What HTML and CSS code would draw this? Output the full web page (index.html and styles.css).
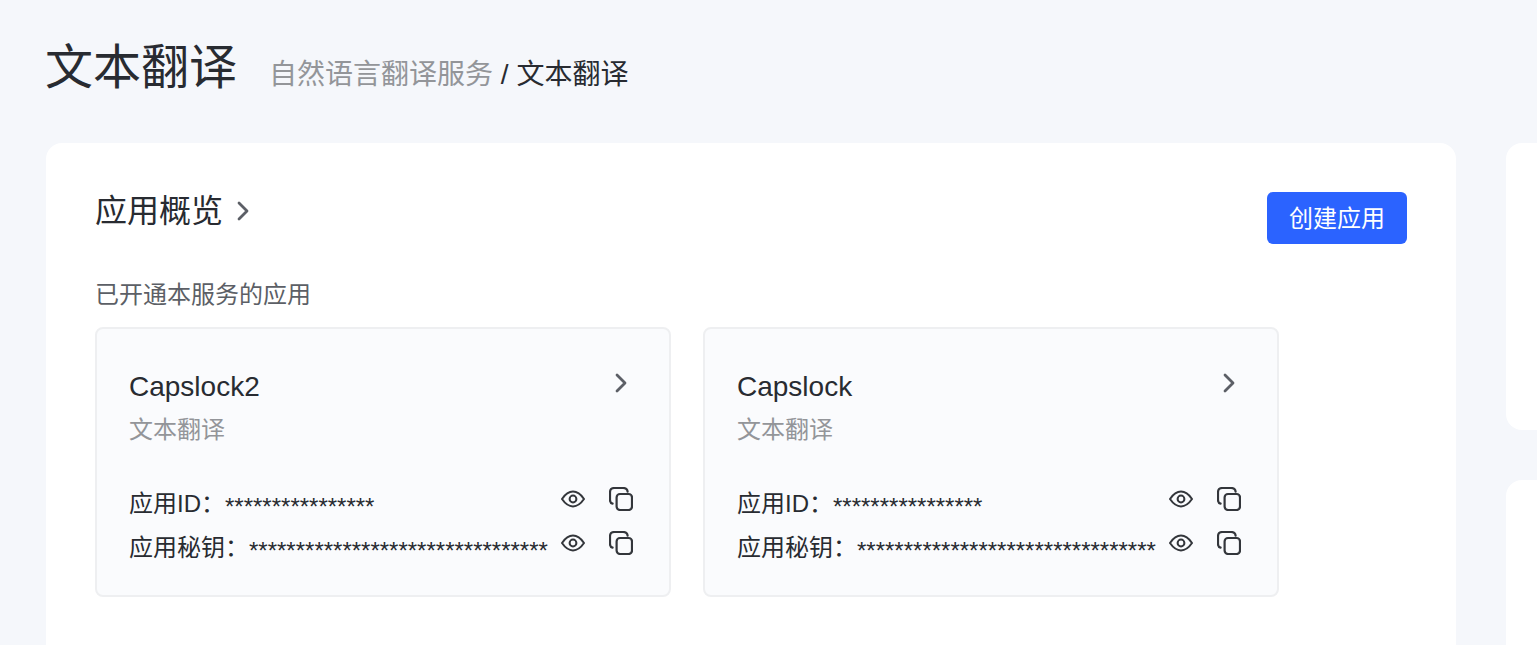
FILE: index.html
```html
<!DOCTYPE html>
<html lang="zh-CN">
<head>
<meta charset="utf-8">
<title>文本翻译</title>
<link rel="stylesheet" href="styles.css">
</head>
<body>
<svg class="defs" width="0" height="0" aria-hidden="true">
  <symbol id="eye" viewBox="0 0 24 24">
    <path d="M1 12C4 7.6 7.8 4.6 12 4.6S20 7.6 23 12C20 16.4 16.2 19.4 12 19.4S4 16.4 1 12Z" fill="none" stroke="currentColor" stroke-width="2" stroke-linejoin="round"/>
    <circle cx="12" cy="12" r="3.4" fill="none" stroke="currentColor" stroke-width="2"/>
  </symbol>
  <symbol id="copy" viewBox="0 0 24 24">
    <rect x="7.6" y="7" width="15.4" height="16" rx="3.4" fill="none" stroke="currentColor" stroke-width="2.2"/>
    <path d="M3.6 16.6C1.8 16.2 1 15 1 13V5.4C1 2.8 2.8 1 5.4 1H14C16.6 1 18.4 2.6 18.6 4.6" fill="none" stroke="currentColor" stroke-width="2.2" stroke-linecap="round"/>
  </symbol>
  <symbol id="chev" viewBox="0 0 12 20">
    <path d="M2 2L10 10L2 18" fill="none" stroke="currentColor" stroke-width="2.8" stroke-linecap="round" stroke-linejoin="round"/>
  </symbol>
</svg>
<header class="page-head">
  <h1 class="page-title">文本翻译</h1>
  <div class="crumbs"><span class="crumb-muted">自然语言翻译服务</span> <span class="crumb-sep">/</span> <span>文本翻译</span></div>
</header>
<div class="layout">
  <main class="panel">
    <div class="panel-head">
      <h2 class="panel-title">应用概览<svg class="panel-chev"><use href="#chev"/></svg></h2>
      <button class="primary-btn" type="button">创建应用</button>
    </div>
    <p class="section-label">已开通本服务的应用</p>
    <div class="app-list">
      <article class="app-card">
        <div class="app-top">
          <div>
            <div class="app-name">Capslock2</div>
            <div class="app-service">文本翻译</div>
          </div>
          <svg class="app-chev"><use href="#chev"/></svg>
        </div>
        <div class="cred-row">
          <div class="cred-text">应用ID：<span class="stars">****************</span></div>
          <div class="cred-icons"><svg class="icon"><use href="#eye"/></svg><svg class="icon"><use href="#copy"/></svg></div>
        </div>
        <div class="cred-row">
          <div class="cred-text">应用秘钥：<span class="stars">********************************</span></div>
          <div class="cred-icons"><svg class="icon"><use href="#eye"/></svg><svg class="icon"><use href="#copy"/></svg></div>
        </div>
      </article>
      <article class="app-card">
        <div class="app-top">
          <div>
            <div class="app-name">Capslock</div>
            <div class="app-service">文本翻译</div>
          </div>
          <svg class="app-chev"><use href="#chev"/></svg>
        </div>
        <div class="cred-row">
          <div class="cred-text">应用ID：<span class="stars">****************</span></div>
          <div class="cred-icons"><svg class="icon"><use href="#eye"/></svg><svg class="icon"><use href="#copy"/></svg></div>
        </div>
        <div class="cred-row">
          <div class="cred-text">应用秘钥：<span class="stars">********************************</span></div>
          <div class="cred-icons"><svg class="icon"><use href="#eye"/></svg><svg class="icon"><use href="#copy"/></svg></div>
        </div>
      </article>
    </div>
  </main>
  <aside class="side">
    <div class="side-card side-card-top"></div>
    <div class="side-card side-card-bottom"></div>
  </aside>
</div>
</body>
</html>
```
FILE: styles.css
```css
* { box-sizing: border-box; }
html, body { height: 100%; }
body {
  margin: 0;
  width: 1537px;
  height: 645px;
  overflow: hidden;
  background: #f5f7fb;
  padding: 34px 0 0 46px;
  color: #282b31;
  font-family: "Liberation Sans", "Noto Sans CJK SC", sans-serif;
}
.defs { position: absolute; }
.page-head { display: flex; align-items: baseline; height: 66px; margin-bottom: 43px; }
.page-title { margin: 0 0 0 -1px; font-size: 48px; line-height: 68px; font-weight: 400; }
.crumbs { margin-left: 32px; font-size: 28px; line-height: 40px; white-space: nowrap; }
.crumb-muted { color: #939599; }
.layout { display: flex; gap: 50px; width: 1600px; }
.panel {
  flex: 0 0 1410px;
  height: 600px;
  background: #fff;
  border-radius: 16px;
  padding: 48px 49px;
}
.panel-head { display: flex; justify-content: space-between; align-items: flex-start; }
.panel-title { margin: 1px 0 0; display: flex; align-items: center; font-size: 32px; line-height: 38px; font-weight: 400; }
.panel-chev { width: 12px; height: 20px; margin-left: 14px; color: #5c5f66; }
.primary-btn {
  width: 140px; height: 52px; margin-top: 1px; padding: 0 0 3px;
  border: 0; border-radius: 6px;
  background: #2b63ff; color: #fff;
  font: inherit; font-size: 24px;
}
.section-label { margin: 34px 0 0; font-size: 24px; line-height: 34px; color: #5c5f66; }
.app-list { display: flex; gap: 32px; margin-top: 15px; }
.app-card {
  width: 576px; height: 270px;
  background: #fafbfd;
  border: 2px solid #eeeff1;
  border-radius: 8px;
  padding: 36px 32px 0;
}
.app-top { display: flex; justify-content: space-between; height: 117px; }
.app-name { font-size: 28px; line-height: 44px; }
.app-service { font-size: 24px; line-height: 42px; color: #939599; }
.app-chev { width: 12px; height: 20px; margin: 8px 10px 0 0; color: #5c5f66; }
.cred-row { display: flex; justify-content: space-between; height: 44px; }
.cred-text { font-size: 24px; line-height: 44px; white-space: nowrap; }
.stars { vertical-align: -3px; }
.cred-icons { display: flex; gap: 24px; margin-right: 4px; padding-top: 5px; color: #33363b; }
.icon { width: 24px; height: 24px; }
.side { flex: 0 0 90px; display: flex; flex-direction: column; gap: 50px; }
.side-card { background: #fff; border-radius: 16px; }
.side-card-top { height: 287px; }
.side-card-bottom { height: 300px; }
```
